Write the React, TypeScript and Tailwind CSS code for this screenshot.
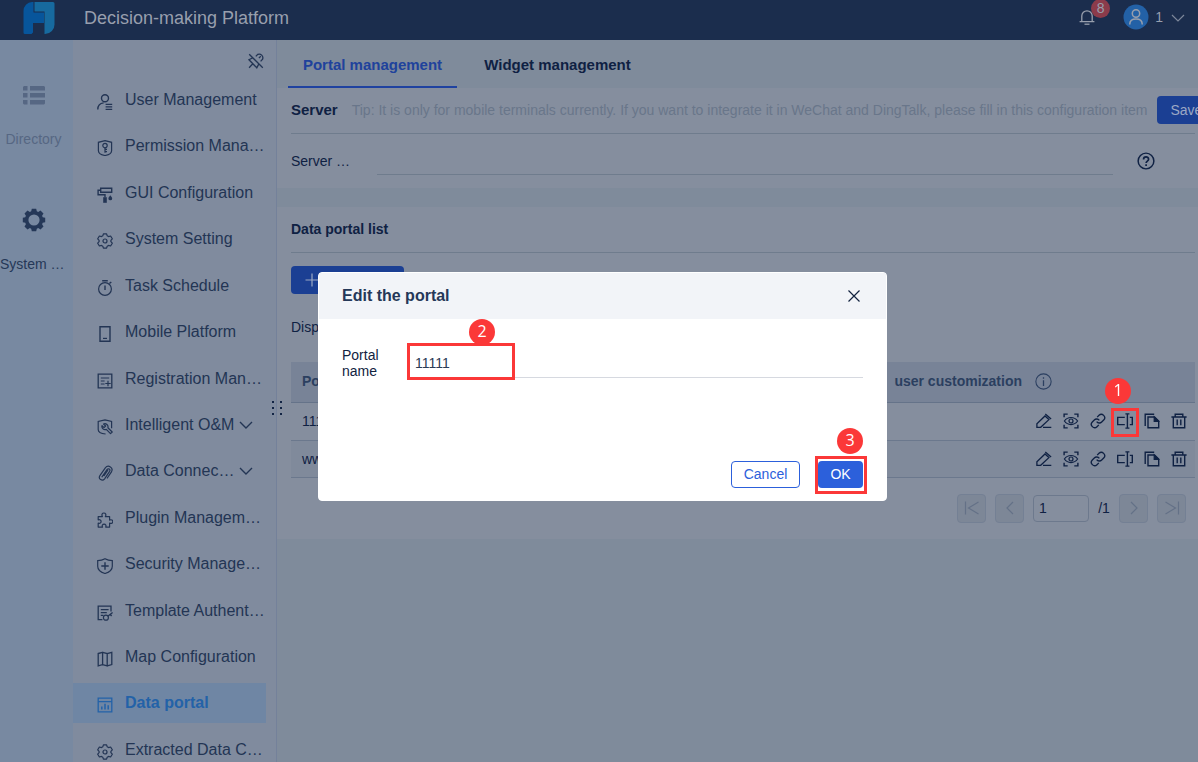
import React from 'react';
import { clsx } from 'clsx';

type IconProps = { className?: string; children: React.ReactNode };

function Icon({ className = 'size-4', children }: IconProps) {
  return (
    <svg
      viewBox="0 0 16 16"
      className={clsx('shrink-0', className)}
      fill="none"
      stroke="currentColor"
      strokeWidth="1.2"
      aria-hidden="true"
    >
      {children}
    </svg>
  );
}

const hexGear = (
  <>
    <path d="M6.4 .8h3.2l.6 2 1.300.8 2.100-.6 1.700 2.800-1.400 1.500v1.400l1.400 1.500-1.700 2.800-2.100-.6-1.300.8-.6 2H6.400l-.6-2-1.300-.8-2.100.6L.7 10.200l1.400-1.500V7.300L.7 5.800 2.400 3l2.100.6 1.300-.8z" strokeLinejoin="round" />
    <circle cx="8" cy="8" r="2" />
  </>
);

const icons = {
  user: (
    <>
      <circle cx="8" cy="4.200" r="3.500" strokeWidth="1.400" />
      <path d="M.8 15.500c0-3.800 2.200-6.200 5.800-6.600" strokeWidth="1.400" />
      <path d="M8.600 10.400h6.600M8.600 12.900h6.600M8.600 15.300h6.600" />
    </>
  ),
  permission: (
    <>
      <path d="M8 .7 14.600 2.300v8.500c0 2.300-3 4.200-6.600 4.700-3.600-.5-6.600-2.400-6.600-4.700V2.300z" />
      <circle cx="8" cy="5.600" r="2.200" />
      <path d="M8 7.600v5.200M8 9.400h2M8 11.600h2" />
    </>
  ),
  gui: (
    <>
      <path d="M3.700 1.200h11v4h-11zM3.700 3.200H1.100v4.600H8v2.400" strokeWidth="1.400" />
      <path d="M6.200 10.200h3.600v5.600H6.200z" fill="currentColor" stroke="none" />
      <path d="M13.300 8.200c1 1.400 1.900 2.300 1.900 3.200a1.900 1.900 0 0 1-3.800 0c0-.9.900-1.800 1.900-3.200z" fill="currentColor" stroke="none" />
    </>
  ),
  system: hexGear,
  task: (
    <>
      <circle cx="8" cy="9" r="6.400" />
      <path d="M5.200.8h5.600M8 5.400V10M12.400 3.600l1.900-1.700" strokeWidth="1.400" />
    </>
  ),
  mobile: (
    <>
      <path d="M3 .7h10v14.600H3z" strokeWidth="1.400" />
      <path d="M6 12.400h4" />
    </>
  ),
  registration: (
    <>
      <path d="M1.200 1.200h13.600v13.600H1.200z" strokeWidth="1.300" />
      <path d="M3.800 5h8.400M3.800 8h3.800M3.800 11h3.800M11 7.800v5.400M8.300 10.500h5.400" />
    </>
  ),
  intelligent: (
    <>
      <path d="M8.600 15C4 14.600 1.200 12.800 1.200 10.500V2.400L8 .8l6.600 1.600v6.800" />
      <path d="M10.900 8.800 15.200 13l-1.700 1.700-4.200-4.300A3.200 3.200 0 0 1 5 6.600l2 2 1.600-1.600-2-2a3.200 3.200 0 0 1 4.300 3.800z" strokeLinejoin="round" />
    </>
  ),
  clip: (
    <path d="M5 11.800 10 4.600c1.300-1.800 3.800-.2 2.600 1.800l-5 7.400c-2.200 3-6.800.2-4.700-3.200l5.400-7.700c2.900-3.800 8.700-.2 6 4.200l-4 5.900M7.100 10.600l3.600-5.200" strokeLinecap="round" />
  ),
  plugin: (
    <path d="M1.200 4.600h4.200c-1-1.900-.2-3.600 1.500-3.600s2.500 1.700 1.500 3.600h4.200v3.500c1.800-.9 3.200.1 3.200 1.500s-1.400 2.400-3.200 1.500v4H8.700c.7-1.700 0-2.900-1.600-2.900s-2.300 1.200-1.600 2.900H1.200v-3.900c1.700.5 2.900-.2 2.900-1.700s-1.200-2.200-2.900-1.700z" strokeLinejoin="round" />
  ),
  security: (
    <>
      <path d="M8 .7c2.200 1.300 4.500 1.900 7.300 1.900v5.600c0 3.400-2.700 5.900-7.300 7.300C3.400 14.100.7 11.600.7 8.200V2.600C3.500 2.600 5.800 2 8 .7z" />
      <path d="M8 4.300v7.400M4.300 8h7.400" strokeWidth="1.400" />
    </>
  ),
  template: (
    <>
      <path d="M5.400 14.600H1.200V1.200H14v5.200M3.800 4.600h7.800M3.800 7.600h6M3.800 10.400h2.600" strokeWidth="1.300" />
      <circle cx="8.900" cy="12.700" r="2.500" />
      <path d="m10.800 11.200 4.800-3.700M13.100 9.300l1.500 1.700" strokeWidth="1.400" />
    </>
  ),
  map: <path d="M1.200 2.500 5.600 1.300v12.300l-4.400 1.200zM5.600 1.300l4.600 1.300v12.300l-4.600-1.300M10.200 2.600l4.600-1.300v12.300l-4.600 1.300" strokeWidth="1.300" />,
  portal: (
    <>
      <path d="M1.200 1.200h13.600v13.600H1.200zM1.200 4.600h13.600" strokeWidth="1.300" />
      <path d="M4.800 9.400v3.200M8 6.800v5.800M11.200 8.200v4.400" strokeWidth="1.500" />
    </>
  ),
};

const menu: { label: string; icon: React.ReactNode; active?: boolean; sub?: boolean }[] = [
  { label: 'User Management', icon: icons.user },
  { label: 'Permission Mana…', icon: icons.permission },
  { label: 'GUI Configuration', icon: icons.gui },
  { label: 'System Setting', icon: icons.system },
  { label: 'Task Schedule', icon: icons.task },
  { label: 'Mobile Platform', icon: icons.mobile },
  { label: 'Registration Man…', icon: icons.registration },
  { label: 'Intelligent O&M', icon: icons.intelligent, sub: true },
  { label: 'Data Connec…', icon: icons.clip, sub: true },
  { label: 'Plugin Managem…', icon: icons.plugin },
  { label: 'Security Manage…', icon: icons.security },
  { label: 'Template Authent…', icon: icons.template },
  { label: 'Map Configuration', icon: icons.map },
  { label: 'Data portal', icon: icons.portal, active: true },
  { label: 'Extracted Data C…', icon: icons.system },
];

const rowActions: { label: string; icon: React.ReactNode }[] = [
  {
    label: 'Edit',
    icon: <path d="M.9 14.300v-3.500L9 3l3.900 3.600-8.200 7.700zM9.300.9l5.800 5.200M7 14.300h8.300" strokeWidth="1.300" />,
  },
  {
    label: 'Preview',
    icon: (
      <>
        <path d="M1.100 4.300V1.100h3.600M11.300 1.100h3.600v3.200M14.900 11.700v3.200h-3.600M4.700 14.900H1.100v-3.200" strokeWidth="1.400" />
        <path d="M1.400 8C4.800 3.300 11.200 3.300 14.600 8 11.200 12.700 4.800 12.700 1.400 8z" />
        <circle cx="8" cy="8" r="2" />
      </>
    ),
  },
  {
    label: 'Copy link',
    icon: (
      <g transform="scale(.6667)" strokeWidth="2">
        <path d="M10 13a5 5 0 0 0 7.540.540l3-3a5 5 0 0 0-7.070-7.070l-2.700 2.700" />
        <path d="M14 11a5 5 0 0 0-7.540-.540l-3 3a5 5 0 0 0 7.070 7.070l2.700-2.700" />
      </g>
    ),
  },
  {
    label: 'Rename',
    icon: <path d="M7.800 4.400H.7v7.200h7.100M12.800 4.400h2.500v7.200h-2.500M8.400.9h4M8.400 15.100h4M10.400.9v14.200" strokeWidth="1.400" />,
  },
  {
    label: 'Duplicate',
    icon: (
      <>
        <path d="M1.200 13V1.200h9M4 4h6.500l4.200 4v6.700H4z" strokeWidth="1.400" />
        <path d="M10.200 4v4.400h4.400z" fill="currentColor" />
      </>
    ),
  },
  {
    label: 'Delete',
    icon: <path d="M.4 4h15.200M4.200 4V1.200h7.600V4M2.300 4v10.700h11.400V4M6.200 6.600v5.600M9.800 6.600v5.600" strokeWidth="1.400" />,
  },
];

function Marker({ n, className }: { n: number; className: string }) {
  return (
    <span
      className={clsx(
        'absolute z-20 flex size-[26px] items-center justify-center rounded-full bg-[#fb3838] pb-0.5 font-["Open_Sans",sans-serif] text-base font-normal text-white',
        className,
      )}
    >
      {n}
    </span>
  );
}

function Header() {
  return (
    <header className="flex h-10 shrink-0 items-center bg-[#1b2d4d] text-[#989fad]">
      <svg viewBox="0 0 32 32" className="-mt-1 ml-[23px] size-8 shrink-0" aria-hidden="true">
        <path d="M9 0h1.500v10.500H21V21H10v9.500L8.500 32H2a1.500 1.500 0 0 1-1.500-1.500V9A9 9 0 0 1 9 0z" fill="#07559b" />
        <path d="M11.500 0H30a1.500 1.500 0 0 1 1.500 1.500V22a9.500 9.500 0 0 1-9.500 10h-.5V9.500h-10z" fill="#176a9f" />
      </svg>
      <h1 className="ml-[29px] pb-1 text-lg leading-8">Decision-making Platform</h1>
      <div className="ml-auto flex items-center pb-1.5">
        <button type="button" aria-label="Notifications" className="relative mr-7 size-4">
          <Icon className="size-4">
            <path d="M2.800 12.500V7a5.200 5.200 0 0 1 10.400 0v5.500M.6 12.600h14.800" strokeWidth="1.300" />
            <path d="M5.500 15.200h5" strokeWidth="1.300" />
          </Icon>
          <span className="absolute -top-2.5 left-3 flex size-[19px] items-center justify-center rounded-full bg-[#8b3b4b] pb-0.5 text-sm leading-none">
            8
          </span>
        </button>
        <svg viewBox="0 0 26 26" className="size-[26px]" fill="none" stroke="currentColor" strokeWidth="1.500" aria-hidden="true">
          <circle cx="13" cy="13" r="12.500" fill="#2361a6" stroke="none" />
          <circle cx="13" cy="9.500" r="3.700" />
          <path d="M6.800 20.600v-.6c0-3.200 2.500-5 6.200-5s6.200 1.800 6.200 5v.6" />
        </svg>
        <span className="ml-[6px] text-sm">1</span>
        <Icon className="ml-[7px] mr-3 mt-0.5 size-4 text-[#7d879a]">
          <path d="m2 5 6 6 6-6" />
        </Icon>
      </div>
    </header>
  );
}

function Rail() {
  return (
    <nav aria-label="Modules" className="flex w-[73px] shrink-0 flex-col bg-[#7889a1] text-sm">
      <a href="#directory" className="mt-[45px] flex flex-col items-center gap-6 pr-[6px] text-[#566783]">
        <svg viewBox="0 0 22 20" className="h-5 w-[22px]" fill="currentColor" aria-hidden="true">
          <path d="M1 1h3.500v4.500H0V2zM7 1h14l1 1v3.500H7zM0 8h4.500v4.500H0zM7 8h15v4.500H7zM0 15h4.500v4.500H1l-1-1zM7 15h15v3.500l-1 1H7z" />
        </svg>
        <span className="leading-5">Directory</span>
      </a>
      <a href="#system" className="mt-[59px] flex flex-col gap-[22px] whitespace-nowrap text-[#253858]">
        <svg viewBox="0 0 24 24" className="ml-[22px] size-6" fill="currentColor" aria-hidden="true">
          <path
            fillRule="evenodd"
            d="M9.800.8h4.400l.6 2.500 1.400.6 2.300-1.400 3 3-1.400 2.300.6 1.400 2.500.6v4.400l-2.500.6-.6 1.400 1.400 2.300-3 3-2.300-1.400-1.400.6-.6 2.500H9.800l-.6-2.500-1.400-.6-2.300 1.400-3-3 1.400-2.300-.6-1.400-2.500-.6V9.800l2.500-.6.6-1.400-1.400-2.300 3-3 2.300 1.400 1.400-.6zM12 6.400a5.600 5.600 0 1 0 0 11.200 5.600 5.600 0 0 0 0-11.200z"
          />
        </svg>
        <span className="leading-5">System …</span>
      </a>
    </nav>
  );
}

function Sidebar() {
  return (
    <aside className="relative w-[204px] shrink-0 border-r border-[#74819a] bg-[#808b9e] text-[#233554]">
      <div className="h-full overflow-hidden">
        <div className="flex h-10 items-center justify-end pr-3 pt-0.5">
          <button type="button" aria-label="Unpin menu">
            <Icon className="size-4">
              <path d="M1.200 1.200 14.800 14.800M7.800 3.400l2-2c2.800-1.200 6 1.600 4.800 4.800l-2 2.200M4.400 5 1 6.800l7.800 8 1.800-3.400M4.800 10.800l-3.700 3.900M10.900 5l1.900-1.700" strokeWidth="1.300" />
            </Icon>
          </button>
        </div>
        <ul className="flex h-[690px] flex-col justify-between pr-[10px]">
          {menu.map((m) => (
            <li key={m.label}>
              <a
                href="#item"
                aria-current={m.active ? 'page' : undefined}
                className={clsx(
                  'flex h-10 items-center whitespace-nowrap pl-6 text-base',
                  m.active && 'bg-[#6f86a4] font-bold text-[#2362a8]',
                )}
              >
                <Icon className="mt-1 size-4">{m.icon}</Icon>
                <span className="ml-3">{m.label}</span>
                {m.sub && (
                  <Icon className="ml-auto mr-3 size-4">
                    <path d="m2 5 6 6 6-6" strokeWidth="1.400" />
                  </Icon>
                )}
              </a>
            </li>
          ))}
        </ul>
      </div>
      <svg viewBox="0 0 10 14" className="absolute -right-[6px] top-[361px] h-[14px] w-[10px] text-[#122444]" fill="currentColor" aria-hidden="true">
        <path d="M0 0h2v2H0zM8 0h2v2H8zM0 6h2v2H0zM8 6h2v2H8zM0 12h2v2H0zM8 12h2v2H8z" />
      </svg>
    </aside>
  );
}

function ServerCard() {
  return (
    <section className="h-[100px] bg-[#858e9e] pl-[14px] pr-[3px]">
      <div className="flex h-[46px] items-center whitespace-nowrap border-b border-[#6f7c8d] pb-0.5">
        <h2 className="text-[15px] font-bold">Server</h2>
        <p className="ml-[14px] text-[#69768a]">
          Tip: It is only for mobile terminals currently. If you want to integrate it in WeChat and DingTalk, please fill in this configuration item
        </p>
        <button type="button" className="ml-[10px] h-7 shrink-0 rounded-sm bg-[#1b3f93] px-[13px] text-[#9ba8c4]">
          Save
        </button>
      </div>
      <div className="flex h-[54px] items-center">
        <label htmlFor="server" className="w-[86px]">
          Server …
        </label>
        <input id="server" className="mr-6 h-7 min-w-0 flex-1 border-b border-[#6f7c8d] bg-transparent outline-none" />
        <button type="button" aria-label="Help" className="mr-10">
          <Icon className="size-[18px]">
            <circle cx="8" cy="8" r="7" strokeWidth="1.300" />
            <path d="M5.800 6.600c0-2.900 4.500-2.900 4.500-.2 0 1.700-2.200 1.600-2.200 3.400M8.100 10.800v1.600" strokeWidth="1.500" />
          </Icon>
        </button>
      </div>
    </section>
  );
}

function Pager() {
  const btn = 'flex size-[29px] items-center justify-center rounded-sm border border-[#748094] bg-[#7d8797] text-[#647187]';
  return (
    <div className="mt-4 flex h-[29px] items-center justify-end gap-[9px] pr-[9px]">
      <button type="button" aria-label="First page" className={btn}>
        <Icon className="size-4"><path d="M1.500 1.500v13M14.500 2 4.500 8l10 6" /></Icon>
      </button>
      <button type="button" aria-label="Previous page" className={btn}>
        <Icon className="size-4"><path d="M11 2 5 8l6 6" /></Icon>
      </button>
      <input aria-label="Page" defaultValue="1" className="h-[27px] w-14 rounded-sm border border-[#6d798d] bg-transparent px-[5px]" />
      <span className="w-3 text-center">/1</span>
      <button type="button" aria-label="Next page" className={btn}>
        <Icon className="size-4"><path d="m5 2 6 6-6 6" /></Icon>
      </button>
      <button type="button" aria-label="Last page" className={btn}>
        <Icon className="size-4"><path d="M14.500 1.500v13M1.500 2l10 6-10 6" /></Icon>
      </button>
    </div>
  );
}

function PortalList() {
  return (
    <section className="mt-[19px] bg-[#858e9e] pb-4 pl-[14px] pr-[3px]">
      <h2 className="flex h-[46px] items-center border-b border-[#6f7c8d] pb-0.5 font-bold">Data portal list</h2>
      <button
        type="button"
        aria-label="Add portal"
        className="mt-[13px] flex h-7 w-[113px] items-center rounded-sm bg-[#1b3f93] pl-[13px] text-[#9ba8c4]"
      >
        <Icon className="size-4"><path d="M8 1.500v13M1.500 8h13" /></Icon>
      </button>
      <p className="mt-[23px] leading-5">Display</p>
      <table className="mt-[25px] w-full border-collapse">
        <thead className="bg-[#788397] text-[#2b3f60]">
          <tr className="h-10 border-b border-[#657389] text-left">
            <th scope="col" className="pb-0.5 pl-[11px]">Port</th>
            <th scope="col" className="pr-[143px]">
              <span className="flex items-center justify-end gap-[13px] whitespace-nowrap">
                <span className="pb-0.5">user customization</span>
                <Icon className="size-[17px]">
                  <circle cx="8" cy="8" r="7.200" strokeWidth="1" />
                  <path d="M8 6.800v5.400M8 4v1.500" strokeWidth="1.200" />
                </Icon>
              </span>
            </th>
          </tr>
        </thead>
        <tbody>
          {['11111', 'www'].map((name, r) => (
            <tr key={name} className={clsx('border-b border-[#6b788d]', r === 0 ? 'h-[38px]' : 'h-[37px] bg-[#808a9b]')}>
              <td className="pl-[11px]">{name}</td>
              <td>
                <div className="flex items-center justify-end gap-[11px] pr-2">
                  {rowActions.map((a, i) => (
                    <button key={a.label} type="button" aria-label={a.label} className="relative block size-4">
                      <Icon className="size-4">{a.icon}</Icon>
                      {r === 0 && i === 3 && (
                        <>
                          <span className="absolute -left-[6px] -top-[5px] h-[29px] w-7 border-[3px] border-[#fb3838]" />
                          <Marker n={1} className="-left-[12px] -top-[35px]" />
                        </>
                      )}
                    </button>
                  ))}
                </div>
              </td>
            </tr>
          ))}
        </tbody>
      </table>
      <Pager />
    </section>
  );
}

function EditDialog() {
  return (
    <div className="fixed inset-0 z-10 flex items-center justify-center pl-[7px] pt-[11px]">
      <div role="dialog" aria-labelledby="dialog-title" className="w-[569px] rounded-sm border border-white bg-white text-[#12233f]">
        <div className="flex h-[46px] items-center justify-between bg-[#f2f4f8] pl-[23px] pr-6">
          <h2 id="dialog-title" className="text-base font-bold text-[#253858]">Edit the portal</h2>
          <button type="button" aria-label="Close">
            <Icon className="size-4"><path d="m2.500 2.500 11 11M13.500 2.500l-11 11" /></Icon>
          </button>
        </div>
        <div className="flex items-center px-[23px] pt-[23px]">
          <label htmlFor="portal-name" className="mt-[5px] w-[65px] leading-4">
            Portal
            <br />
            name
          </label>
          <div className="relative flex-1 border-b border-[#d6d9e0]">
            <input id="portal-name" defaultValue="11111" className="block h-[34px] w-[108px] pl-2 pt-1.5 text-[#2b3b55] outline-none" />
            <span className="absolute left-0 top-0 h-[37px] w-[108px] border-[3px] border-[#fb3838]" />
            <Marker n={2} className="-top-6 left-[62px]" />
          </div>
        </div>
        <div className="mt-[82px] flex justify-end gap-[18px] pb-3 pr-[23px]">
          <button type="button" className="h-[27px] w-[69px] rounded-sm border border-[#2c60db] pb-0.5 text-[#2c60db]">
            Cancel
          </button>
          <button type="button" className="relative h-[27px] w-[45px] rounded-sm bg-[#2c60db] pb-0.5 text-white">
            OK
            <span className="absolute -left-[3px] -top-[5px] h-[38px] w-[52px] border-[3px] border-[#fb3838]" />
            <Marker n={3} className="-top-[33px] left-[19px]" />
          </button>
        </div>
      </div>
    </div>
  );
}

export default function App() {
  return (
    <div className='flex h-screen flex-col overflow-hidden bg-[#7f8b9b] font-["Liberation_Sans",Arial,sans-serif] text-sm text-[#0f2143]'>
      <Header />
      <div className="flex min-h-0 flex-1">
        <Rail />
        <Sidebar />
        <main className="min-w-0 flex-1 overflow-hidden">
          <div role="tablist" className="flex h-12 items-stretch pl-[11px] text-[15px] font-bold">
            <button type="button" role="tab" aria-selected="true" className="w-[169px] border-b-2 border-[#1f42a0] pt-1 text-[#20429c]">
              Portal management
            </button>
            <button type="button" role="tab" aria-selected="false" className="w-[201px] pt-0.5">
              Widget management
            </button>
          </div>
          <ServerCard />
          <PortalList />
        </main>
      </div>
      <EditDialog />
    </div>
  );
}
